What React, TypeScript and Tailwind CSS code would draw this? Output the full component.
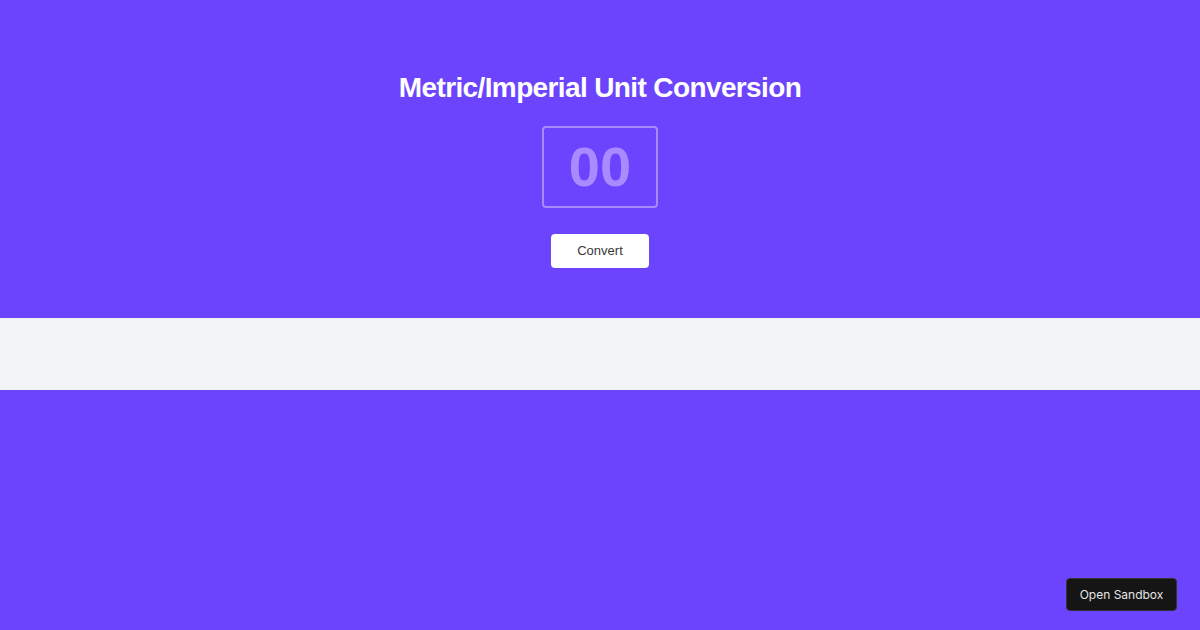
export default function App() {
  return (
    <div className="w-[1200px] h-[630px] bg-[#6c44fe] flex flex-col font-['Liberation_Sans',Arial,sans-serif] relative">
      <div className="h-[318px] flex flex-col items-center pt-[71px]">
        <h1 className="text-[28px] leading-[34px] font-bold text-white tracking-[-0.62px]">Metric/Imperial Unit Conversion</h1>
        <div className="mt-[21px] w-[116px] h-[82px] border-2 border-[#a58cff] rounded-[4px] flex items-center justify-center">
          <span className="text-[56px] leading-none font-bold text-[#a98bff]">00</span>
        </div>
        <button className="mt-[26px] w-[98px] h-[34px] bg-white rounded-[4px] text-[13px] text-[#383838]">Convert</button>
      </div>
      <div className="h-[72px] bg-[#f3f4f6]" />
      <div className="flex-1" />
      <button className="absolute right-[23px] bottom-[19px] w-[111px] h-[33px] bg-[#151515] border border-[#333] rounded-[4px] text-[12px] text-[#e5e5e5] font-['Inter',sans-serif]">Open Sandbox</button>
    </div>
  );
}
